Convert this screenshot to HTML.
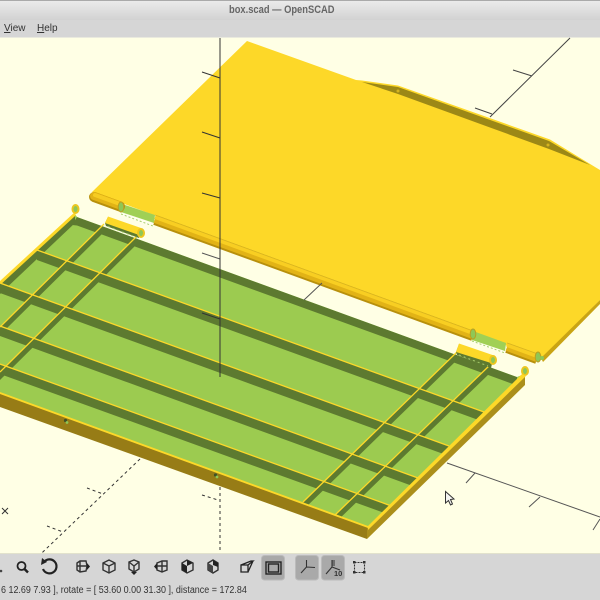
<!DOCTYPE html>
<html><head><meta charset="utf-8"><style>
html,body{margin:0;padding:0;background:#d6d6d6}
#w{position:relative;width:600px;height:600px;overflow:hidden;font-family:"Liberation Sans",sans-serif}
.t{position:absolute;white-space:nowrap;transform-origin:0 0}
svg{position:absolute;left:0;top:0}
</style></head><body><div id="w">
<svg width="600" height="600" viewBox="0 0 600 600">
<defs>
<clipPath id="inner"><polygon points="0,283 75,214 77,217 517,377 527,373 368,527 0,393"/></clipPath>
<linearGradient id="tb" x1="0" y1="0" x2="0" y2="1"><stop offset="0" stop-color="#ececec"/><stop offset="1" stop-color="#d2d2d2"/></linearGradient>
<filter id="b" x="-5%" y="-5%" width="110%" height="110%"><feGaussianBlur stdDeviation="0.35"/></filter>
</defs>
<rect width="600" height="600" fill="#d6d6d6"/>
<rect width="600" height="20" fill="url(#tb)"/>
<rect width="600" height="1" fill="#aaa"/>
<rect y="37.500" width="600" height="515.500" fill="#ffffe5"/>

<!-- axes behind -->
<g stroke="#444" fill="none" stroke-width="1">
<path d="M490,117L570,38M513,70L532,76M475,108L492,114"/>
<path d="M447,463L600,517M475,473L466,483M540,497L529,507M600,519L593,530" stroke="#555"/>
<path d="M140,459L0,593M87,488L103,494M47,526L63,532M220,487V553M202,495L218,500" stroke-dasharray="3 3" stroke="#333"/>
<path d="M2,508L8,514M8,508L2,514" stroke="#333"/>
</g>

<!-- lid -->
<polygon points="247,41 356,80 362,80.500 398,85.500 550,139.500 595,167 600,170 600,300 541,360 537,357 92,192" fill="#fdd828"/>
<polygon points="362,82 398,87 549,141 590,165 549,149 398,94" fill="#9c8816"/>
<circle cx="398" cy="91" r="1.500" fill="#d6b420"/><circle cx="548" cy="145" r="1.500" fill="#d6b420"/>
<polygon points="600,300 600,304 543,362 541,358" fill="#c9a414"/>
<!-- gap under hinge green -->
<polygon points="121,211 155,223 153,227 120,215" fill="#ffffee"/>
<polygon points="472,337 506,349 505,354 471,342" fill="#ffffee"/>
<path d="M121,214L153,226M472,341L505,353" stroke="#a8cf6c" stroke-width="1" stroke-dasharray="2 2" fill="none"/>
<polygon points="122,204 155,215 154,223 121,212" fill="#a0d055"/>
<polygon points="473,331 506,343 505,351 472,340" fill="#a0d055"/>
<!-- hinge cylinders -->
<g fill="none" stroke-linecap="round">
<path d="M94,197L120,206.500" stroke="#b8900c" stroke-width="10"/>
<path d="M94,196L120,205.500" stroke="#e2b316" stroke-width="8"/>
<path d="M95,195L120,204" stroke="#f6cc22" stroke-width="4"/>
</g>
<g fill="none">
<path d="M155,220L473,336M507,348L537,359" stroke="#b8900c" stroke-width="10"/>
<path d="M155,219L473,335M507,347L537,358" stroke="#e2b316" stroke-width="8"/>
<path d="M155,217L473,333M507,345L537,356" stroke="#f8ce22" stroke-width="4"/>
<path d="M155,215L473,331M507,343L538,354" stroke="#d9b520" stroke-width=".8"/>
</g>
<g fill="#8fc756" stroke="#b99f22" stroke-width="1"><ellipse cx="121" cy="207" rx="2.800" ry="5"/><ellipse cx="473" cy="334" rx="2.800" ry="5"/><ellipse cx="538" cy="357" rx="2.800" ry="5"/></g>
<circle cx="542" cy="358" r="2" fill="#8fc756"/>

<!-- tray interior -->
<polygon points="0,283 75,214 77,217 517,377 527,373 368,527 0,393" fill="#9ccb50"/>
<g clip-path="url(#inner)" fill="#5d7a30">
<polygon points="77,217 517,377 517,385.500 77,225.500 72,225"/>
<polygon points="75,214 0,285 0,294 75,223"/>
<polygon points="37,250 484,412 484,422 37,260"/>
<polygon points="0,283 449,446 449,456 0,293"/>
<polygon points="0,326 418,478 418,488 0,336"/>
<polygon points="0,364 390,505.800 390,515 0,374"/>
<polygon points="103,225 0,327 0,335 103,233"/>
<polygon points="138,235 0,372 0,380 138,243"/>
<polygon points="457,352 303,502 303,510 457,360"/>
<polygon points="490,365 335,515 335,523 490,373"/>
</g>
<g stroke="#fdd828" fill="none" stroke-width="1.300">
<path d="M37,250L484,412M0,283L449,446M0,326L418,478M0,364L390,505.500"/>
<path d="M104,224L0,327M139,234L0,372M458,351L303,502M491,364L335,515"/>
</g>
<path d="M75,214L0,283" stroke="#fdd828" stroke-width="3" fill="none"/>
<!-- gap axis -->
<path d="M322,283L304,300M202,253L220,259" stroke="#555" stroke-width="1" fill="none"/>
<!-- hinge blocks -->
<polygon points="105,223 108,217 141,229 139,238 106,226" fill="#5d7a30"/>
<polygon points="105,223 108,216.500 141,228 139,235" fill="#fdd828"/>
<polygon points="456,352 459,344 494,356 491,368 457,355" fill="#5d7a30"/>
<polygon points="456,352 459,343.500 494,355.500 491,363" fill="#fdd828"/>
<path d="M108,226.500L137,237.500M459,355L488,366" stroke="#a3c86a" stroke-width="1" stroke-dasharray="2 3" fill="none"/>
<g fill="#8fc756" stroke="#ebc61f" stroke-width="2">
<ellipse cx="75.500" cy="209" rx="3" ry="4"/><ellipse cx="141" cy="233" rx="3" ry="4"/><ellipse cx="493" cy="360" rx="3" ry="4"/><ellipse cx="525" cy="371" rx="3" ry="4"/>
</g>
<!-- outer walls -->
<polygon points="0,393 368,527 367,539 0,407" fill="#977c16"/>
<polygon points="367,539 367,528 525,376 525,385 447,461" fill="#ab8f1b"/>
<polygon points="0,392 368,526 368,528 0,394" fill="#fdd828"/>
<polygon points="368,526 522,374 526,376 368,530" fill="#fdd828"/>
<!-- dots -->
<circle cx="65.500" cy="420.500" r="1.600" fill="#3e5226"/><circle cx="67" cy="422.500" r="1.400" fill="#8fc756"/>
<circle cx="215.500" cy="475" r="1.600" fill="#3e5226"/><circle cx="217" cy="477" r="1.400" fill="#8fc756"/>

<!-- z axis front -->
<path d="M220,38V377" stroke="#333" stroke-width="1" fill="none"/>
<path d="M202,72L220,78M202,132L220,138M202,193L220,198M202,313L220,319" stroke="#333" stroke-width="1" fill="none"/>
<!-- cursor -->
<path d="M445.500,491.500V503L448.500,500.500L450.500,505L452.500,504L450.500,499.500L454,499Z" fill="#f4f4f0" stroke="#333" stroke-width="1"/>

<!-- toolbar -->
<rect y="553" width="600" height="47" fill="#d6d6d6"/>
<rect y="553" width="600" height="1" fill="#e2e2cc"/>
<circle cx="1" cy="571" r="1.300" fill="#444"/>
<rect x="261.500" y="555.500" width="23" height="24.500" rx="3" fill="#a9a9a9" stroke="#bbb"/>
<rect x="295.500" y="555.500" width="23" height="24.500" rx="3" fill="#a9a9a9" stroke="#bbb"/>
<rect x="321.500" y="555.500" width="23" height="24.500" rx="3" fill="#a9a9a9" stroke="#bbb"/>
<g filter="url(#b)">
<g fill="none" stroke="#222" stroke-width="1.800">
<circle cx="21.500" cy="566" r="4"/><path d="M24.500,569L28,572.500" stroke-width="2.400"/>
<path d="M44,562A7,7 0 1 1 43,569" stroke-width="2.200"/>
</g>
<polygon points="42,558 47,562 41,565" fill="#222"/>
<g fill="none" stroke="#333" stroke-width="1.400">
<path d="M77,563L80,561H86L87,566L86,571L80,572L77,570ZM77,566H87M80,561V572"/>
<path d="M103,563L109,560L115,563V570L109,573L103,570ZM103,563L109,566L115,563M109,566V573"/>
<path d="M129,562L134,560L139,562V569L134,572L129,569ZM129,562L134,566L139,562M134,566V572"/>
<path d="M157,563L162,561H167V570L162,572L157,570ZM157,566H167M162,561V572"/>
<path d="M208,563L213,560L218,563V570L213,573L208,570Z"/>
<path d="M182,563L187,560L193,563V570L187,573L182,570Z"/>
</g>
<g fill="#222">
<polygon points="87,563 90,566.500 87,570"/>
<polygon points="131,572 137,572 134,575"/>
<polygon points="157,563 154,566.500 157,570"/>
<polygon points="182,563 187,566 187,573 182,570"/>
<polygon points="187,560 193,563 187,566"/>
<polygon points="213,560 218,563 218,567 213,565"/>
<polygon points="208,563 213,566 213,573 208,570" fill="#444"/>
</g>
<g fill="none" stroke="#222" stroke-width="1.300">
<path d="M241,565H248V572H241ZM241,565L251,561H253L248,565M253,561L248,572"/>
</g>
<rect x="266" y="562" width="15" height="12" fill="none" stroke="#222" stroke-width="1.400"/>
<rect x="268.500" y="564" width="10" height="8" fill="none" stroke="#222" stroke-width="1.400"/>
<g fill="none" stroke="#333" stroke-width="1.100">
<path d="M306.500,560V567M306.500,567L315,567.500M306.500,567L301,573"/>
<path d="M332,560V567M332,567L340,570M332,567L326,574M332,561H335M332,563H335M332,565H335"/>
<rect x="354.500" y="562.500" width="10" height="10" stroke-dasharray="2 1"/>
</g>
<g fill="#333"><rect x="353" y="561" width="2.500" height="2.500"/><rect x="363" y="561" width="2.500" height="2.500"/><rect x="353" y="571" width="2.500" height="2.500"/><rect x="363" y="571" width="2.500" height="2.500"/></g>
<text x="334" y="576" font-size="7.500" font-family="Liberation Sans" font-weight="bold" fill="#333">10</text>
</g>
</svg>
<div class="t" style="left:229px;top:4px;font-size:11px;font-weight:bold;color:#666;transform:scaleX(.85)">box.scad — OpenSCAD</div>
<div class="t" style="left:4px;top:22px;font-size:10px;color:#333;line-height:13px"><u>V</u>iew</div>
<div class="t" style="left:37px;top:22px;font-size:10px;color:#333;line-height:13px"><u>H</u>elp</div>
<div class="t" style="left:1px;top:585px;font-size:10px;color:#333;transform:scaleX(.895)">6 12.69 7.93 ], rotate = [ 53.60 0.00 31.30 ], distance = 172.84</div>
</div></body></html>
